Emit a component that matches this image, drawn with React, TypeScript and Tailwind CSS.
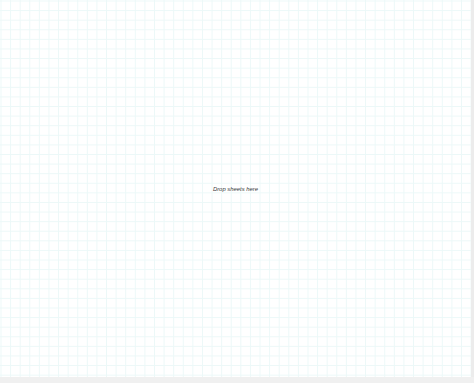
export default function App() {
  return (
    <div className="flex h-[383px] w-[474px] flex-col bg-white font-['Liberation_Sans',sans-serif]">
      <div className="flex min-h-0 flex-1">
        <div className="flex flex-1 items-center justify-center bg-[linear-gradient(to_right,#ecf8f8_1px,transparent_1px),linear-gradient(to_bottom,#ecf8f8_1px,transparent_1px)] bg-[size:9.6px_9.6px] bg-[position:0.5px_0.5px]">
          <span className="pt-[1px] text-[5.9px] italic text-[#3a3a3a]">Drop sheets here</span>
        </div>
        <div className="w-[3px] bg-[#ececec]" />
      </div>
      <div className="h-[6px] bg-[#f0f0f0]" />
    </div>
  );
}
